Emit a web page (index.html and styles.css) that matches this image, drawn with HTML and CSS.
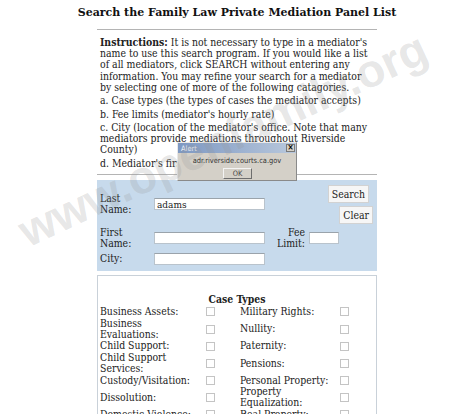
FILE: index.html
```html
<html>
    <head>
        <title>Family Law Private Mediation Panel</title>
        <link rel="stylesheet" href="styles.css">
    </head>
    <body>
        <h1 class="title">Search the Family Law Private Mediation Panel List</h1>
        <div class="page">
            <hr class="rule">
            <div class="instructions">
                <p><b>Instructions:</b> It is not necessary to type in a mediator's name to use this search program. If you would like a list of all mediators, click SEARCH without entering any information. You may refine your search for a mediator by selecting one of more of the following catagories.</p>
                <p>a. Case types (the types of cases the mediator accepts)</p>
                <p>b. Fee limits (mediator's hourly rate)</p>
                <p>c. City (location of the mediator's office. Note that many mediators provide mediations throughout Riverside County)</p>
                <p>d. Mediator's first or last name</p>
            </div>
            <hr class="rule rule-bottom">
            <form class="search-box">
                <label class="field-label">Last<br>Name:</label>
                <input class="text-input" type="text" value="adams">
                <div class="actions">
                    <button class="btn btn-search" type="button">Search</button>
                    <button class="btn" type="button">Clear</button>
                </div>
                <label class="field-label">First<br>Name:</label>
                <input class="text-input" type="text">
                <label class="field-label fee-label">Fee<br>Limit:</label>
                <input class="text-input fee-input" type="text">
                <label class="field-label new-row">City:</label>
                <input class="text-input" type="text">
            </form>
            <div class="case-types">
                <div class="case-heading">Case Types</div>
                <div class="case-grid">
                    <span>Business Assets:</span><span class="check"></span>
                    <span>Military Rights:</span><span class="check"></span>
                    <span>Business<br>Evaluations:</span><span class="check"></span>
                    <span>Nullity:</span><span class="check"></span>
                    <span>Child Support:</span><span class="check"></span>
                    <span>Paternity:</span><span class="check"></span>
                    <span>Child Support<br>Services:</span><span class="check"></span>
                    <span>Pensions:</span><span class="check"></span>
                    <span>Custody/Visitation:</span><span class="check"></span>
                    <span>Personal Property:</span><span class="check"></span>
                    <span>Dissolution:</span><span class="check"></span>
                    <span>Property<br>Equalization:</span><span class="check"></span>
                    <span>Domestic Violence:</span><span class="check"></span>
                    <span>Real Property:</span><span class="check"></span>
                </div>
            </div>
        </div>

        <div class="alert">
            <div class="alert-bar">
                <span>Alert</span>
                <span class="alert-close">&#215;</span>
            </div>
            <div class="alert-msg">adr.riverside.courts.ca.gov</div>
            <div class="alert-ok">OK</div>
        </div>

        <div class="watermark">www.openfamily.org</div>
    </body>
</html>
```

FILE: styles.css
```css
* {
    margin: 0;
    box-sizing: border-box;
}

body {
    padding: 0;
    background-color: white;
    color: #222222;
    font-family: "DejaVu Serif Condensed", "DejaVu Serif", serif;
    font-stretch: semi-condensed;
    font-size: 10.4px;
    line-height: 11.4px;
    overflow: hidden;
}

.title {
    padding-top: 6px;
    font-family: "DejaVu Serif", serif;
    font-stretch: normal;
    font-size: 11px;
    line-height: 13px;
    text-align: center;
    color: #111111;
}

.page {
    width: 280px;
    margin: 0 auto;
}

.rule {
    border: 0;
    border-top: 1px solid #b4b4b4;
    height: 0;
    margin-top: 10px;
}

.rule-bottom {
    margin-top: 5px;
}

.instructions {
    padding: 7px 5px 0 3px;
    line-height: 11.2px;
}

.instructions p {
    margin-bottom: 2.2px;
}

.search-box {
    display: grid;
    grid-template-columns: 54px 111px 44px 34px 1fr;
    row-gap: 3px;
    align-items: center;
    margin-top: 5px;
    padding: 5px 4px 6px 3px;
    background-color: #c7daec;
}

.field-label {
    color: #222222;
}

.new-row {
    grid-column: 1;
}

.text-input {
    width: 111px;
    height: 12px;
    padding: 0 2px;
    border: 1px solid #b9c3cc;
    border-top-color: #9aa3ab;
    background-color: white;
    font-family: inherit;
    font-size: 10px;
    color: #222222;
}

.fee-label {
    text-align: right;
    padding-right: 4px;
}

.fee-input {
    width: 30px;
}

.actions {
    grid-column: 3 / 6;
    display: flex;
    flex-direction: column;
    align-items: flex-end;
    gap: 3px;
}

.btn {
    height: 18px;
    padding: 0 3px;
    border: 1px solid #d2d2d2;
    background-color: #f6f6f6;
    font-family: inherit;
    font-size: 10.4px;
    color: #222222;
}

.btn-search {
    margin-right: 4px;
}

.case-types {
    margin-top: 4px;
    padding: 18px 2px 0 2px;
    border: 1px solid #c9d1d9;
    border-bottom: 0;
    height: 200px;
}

.case-heading {
    font-weight: bold;
    text-align: center;
    margin-bottom: 1px;
}

.case-grid {
    display: grid;
    grid-template-columns: 106px 34px 100px 1fr;
    align-items: center;
}

.check {
    display: block;
    width: 9px;
    height: 9px;
    border: 1px solid #c4c4c4;
    background-color: white;
}

.alert {
    position: absolute;
    left: 177px;
    top: 142px;
    width: 120px;
    height: 39px;
    border: 1px solid #8a8a8a;
    border-top-color: #e8e8e8;
    border-left-color: #e8e8e8;
    background-color: #d4d0c8;
    font-family: "DejaVu Sans Condensed", "DejaVu Sans", sans-serif;
    font-size: 7.4px;
    line-height: 9px;
}

.alert-bar {
    display: flex;
    justify-content: space-between;
    align-items: center;
    height: 10px;
    padding: 0 1px 0 3px;
    background: linear-gradient(to right, #7d98c2, #b9c8dc);
    color: #eef2f8;
}

.alert-close {
    width: 9px;
    height: 8px;
    border: 1px solid #7a7a7a;
    background-color: #d4d0c8;
    color: #000000;
    font-size: 8px;
    line-height: 6px;
    text-align: center;
    font-weight: bold;
}

.alert-msg {
    margin-top: 3px;
    text-align: center;
    color: #333333;
}

.alert-ok {
    width: 29px;
    height: 11px;
    margin: 3px 0 0 45px;
    border: 1px solid #6e6e6e;
    border-top-color: #f4f4f4;
    border-left-color: #f4f4f4;
    text-align: center;
    color: #444444;
    line-height: 9px;
}

.watermark {
    position: absolute;
    left: 223px;
    top: 140px;
    transform: translate(-50%, -50%) rotate(-25deg);
    white-space: nowrap;
    font-family: "Liberation Sans", Arial, sans-serif;
    font-weight: bold;
    font-size: 46px;
    color: rgba(150, 150, 150, 0.24);
    pointer-events: none;
}
```
